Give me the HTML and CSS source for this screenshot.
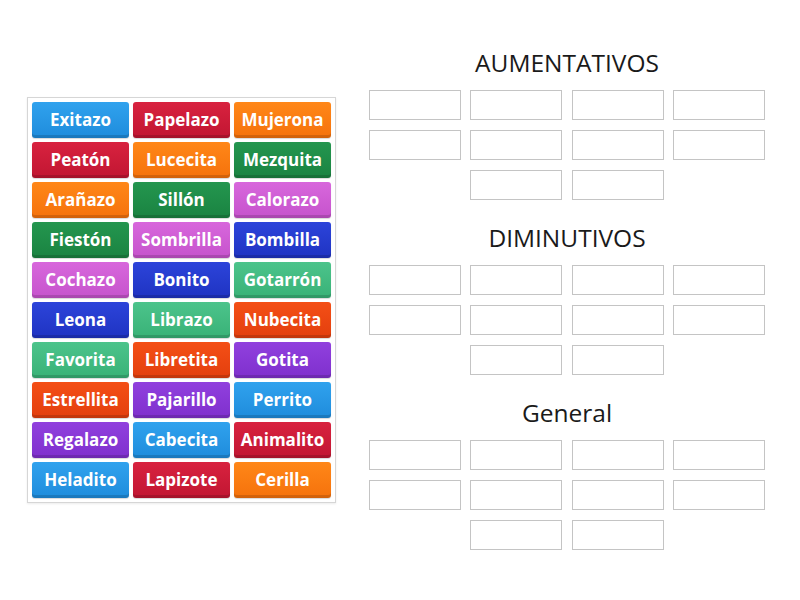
FILE: index.html
```html
<!DOCTYPE html>
<html lang="es">
<head>
<meta charset="utf-8">
<link rel="stylesheet" href="styles.css">
</head>
<body>
<div class="page">
  <div class="bank">
    <div class="tile blue">Exitazo</div>
    <div class="tile red">Papelazo</div>
    <div class="tile orange">Mujerona</div>
    <div class="tile red">Peatón</div>
    <div class="tile orange">Lucecita</div>
    <div class="tile green">Mezquita</div>
    <div class="tile orange">Arañazo</div>
    <div class="tile green">Sillón</div>
    <div class="tile pink">Calorazo</div>
    <div class="tile green">Fiestón</div>
    <div class="tile pink">Sombrilla</div>
    <div class="tile navy">Bombilla</div>
    <div class="tile pink">Cochazo</div>
    <div class="tile navy">Bonito</div>
    <div class="tile teal">Gotarrón</div>
    <div class="tile navy">Leona</div>
    <div class="tile teal">Librazo</div>
    <div class="tile vermilion">Nubecita</div>
    <div class="tile teal">Favorita</div>
    <div class="tile vermilion">Libretita</div>
    <div class="tile purple">Gotita</div>
    <div class="tile vermilion">Estrellita</div>
    <div class="tile purple">Pajarillo</div>
    <div class="tile blue">Perrito</div>
    <div class="tile purple">Regalazo</div>
    <div class="tile blue">Cabecita</div>
    <div class="tile red">Animalito</div>
    <div class="tile blue">Heladito</div>
    <div class="tile red">Lapizote</div>
    <div class="tile orange">Cerilla</div>
  </div>
  <div class="groups">
    <section class="group">
      <h2 class="title">AUMENTATIVOS</h2>
      <div class="slots">
        <div class="slot"></div><div class="slot"></div><div class="slot"></div><div class="slot"></div>
        <div class="slot"></div><div class="slot"></div><div class="slot"></div><div class="slot"></div>
        <div class="slot"></div><div class="slot"></div>
      </div>
    </section>
    <section class="group">
      <h2 class="title">DIMINUTIVOS</h2>
      <div class="slots">
        <div class="slot"></div><div class="slot"></div><div class="slot"></div><div class="slot"></div>
        <div class="slot"></div><div class="slot"></div><div class="slot"></div><div class="slot"></div>
        <div class="slot"></div><div class="slot"></div>
      </div>
    </section>
    <section class="group">
      <h2 class="title">General</h2>
      <div class="slots">
        <div class="slot"></div><div class="slot"></div><div class="slot"></div><div class="slot"></div>
        <div class="slot"></div><div class="slot"></div><div class="slot"></div><div class="slot"></div>
        <div class="slot"></div><div class="slot"></div>
      </div>
    </section>
  </div>
</div>
</body>
</html>
```
FILE: styles.css
```css
html, body {
  margin: 0;
  padding: 0;
  background: #fff;
}
body {
  font-family: "Open Sans", "Liberation Sans", sans-serif;
  width: 800px;
  height: 600px;
  overflow: hidden;
}
.page {
  display: flex;
  align-items: flex-start;
  padding: 48px 0 0 27px;
}
.bank {
  margin-top: 49px;
  display: grid;
  grid-template-columns: repeat(3, 97px);
  grid-auto-rows: 36px;
  gap: 4px;
  padding: 4px;
  border: 1px solid #d6d6d6;
  box-shadow: 0 1px 2px rgba(0,0,0,0.08);
  background: #fff;
}
.tile {
  display: flex;
  align-items: center;
  justify-content: center;
  color: #fff;
  font-weight: 700;
  font-size: 17px;
  border-radius: 3px;
  box-shadow: inset 0 -3px 0 rgba(0,0,0,0.14), 0 1px 1px rgba(0,0,0,0.15);
  padding-bottom: 2px;
  box-sizing: border-box;
  white-space: nowrap;
}
.blue { background: linear-gradient(#30a2ee, #1f8cdc); }
.red { background: linear-gradient(#d8223f, #c11632); }
.orange { background: linear-gradient(#ff8718, #f5720c); }
.green { background: linear-gradient(#24964f, #1a8341); }
.pink { background: linear-gradient(#d867dc, #c653cc); }
.navy { background: linear-gradient(#2c44da, #1f33c2); }
.teal { background: linear-gradient(#4cc48b, #39b277); }
.vermilion { background: linear-gradient(#f44f16, #e33f0e); }
.purple { background: linear-gradient(#9140de, #7f30cd); }

.groups {
  margin-left: 33px;
  width: 396px;
  display: flex;
  flex-direction: column;
  gap: 23px;
}
.group {
  display: flex;
  flex-direction: column;
}
.title {
  margin: 0 0 12px;
  font-weight: 400;
  font-size: 24.5px;
  line-height: 30px;
  color: #1a1a1a;
  text-align: center;
}
.slots {
  display: flex;
  flex-wrap: wrap;
  justify-content: center;
  column-gap: 9.33px;
  row-gap: 10px;
}
.slot {
  width: 92px;
  height: 30px;
  box-sizing: border-box;
  border: 1px solid #c4c4c4;
  background: #fff;
}
```
